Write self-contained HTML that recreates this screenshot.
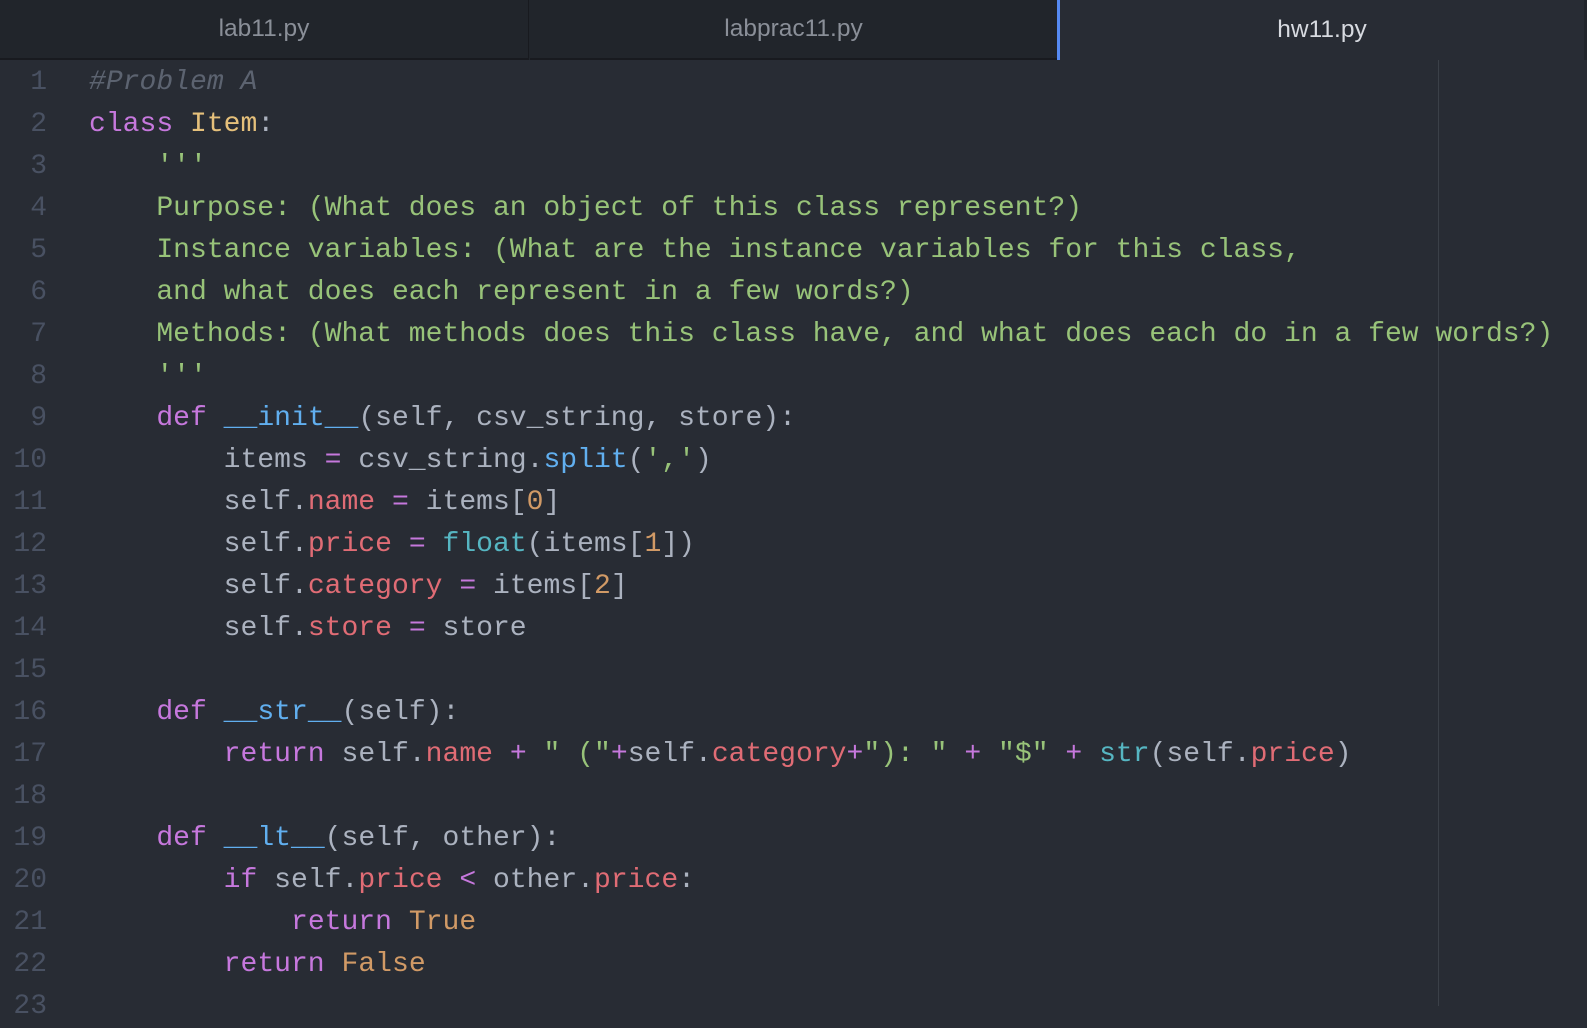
<!DOCTYPE html>
<html><head><meta charset="utf-8"><style>
*{margin:0;padding:0;box-sizing:border-box}
body{width:1587px;height:1006px;background:#282c34;overflow:hidden;position:relative;font-family:"Liberation Mono",monospace}
.tabs{position:absolute;left:0;top:0;width:1587px;height:60px;background:#21252b}
.tab{position:absolute;top:0;height:60px;font:24.5px "Liberation Sans",sans-serif;color:#8a8f98;display:flex;align-items:center;justify-content:center;border-bottom:2px solid #181a1f}
.t1{left:0;width:529px;border-right:1px solid #181a1f}
.t2{left:530px;width:527px}
.t3{left:1057px;width:527px;background:#282c34;color:#d7dae0;border-left:3px solid #568af2;border-bottom:none}
.guide{position:absolute;left:1438px;top:60px;width:1px;height:946px;background:#3b4048}
.gut{position:absolute;left:0;top:61.5px;width:47px;text-align:right;color:#495162;font-size:28px;line-height:42px;white-space:pre}
.code{position:absolute;left:89px;top:61.5px;color:#abb2bf;font-size:28.05px;line-height:42px;white-space:pre}
.c{color:#5c6370;font-style:italic}.k{color:#c678dd}.y{color:#e5c07b}.s{color:#98c379}.f{color:#61afef}.p{color:#e06c75}.n{color:#d19a66}.b{color:#56b6c2}
</style></head><body>
<div class="tabs"><div class="tab t1">lab11.py</div><div class="tab t2">labprac11.py</div><div class="tab t3">hw11.py</div></div>
<div class="guide"></div>
<div class="gut">1
2
3
4
5
6
7
8
9
10
11
12
13
14
15
16
17
18
19
20
21
22
23</div>
<div class="code"><span class="c">#Problem A</span>
<span class="k">class</span> <span class="y">Item</span>:
    <span class="s">'''</span>
<span class="s">    Purpose: (What does an object of this class represent?)</span>
<span class="s">    Instance variables: (What are the instance variables for this class,</span>
<span class="s">    and what does each represent in a few words?)</span>
<span class="s">    Methods: (What methods does this class have, and what does each do in a few words?)</span>
<span class="s">    '''</span>
    <span class="k">def</span> <span class="f">__init__</span>(self, csv_string, store):
        items <span class="k">=</span> csv_string.<span class="f">split</span>(<span class="s">','</span>)
        self.<span class="p">name</span> <span class="k">=</span> items[<span class="n">0</span>]
        self.<span class="p">price</span> <span class="k">=</span> <span class="b">float</span>(items[<span class="n">1</span>])
        self.<span class="p">category</span> <span class="k">=</span> items[<span class="n">2</span>]
        self.<span class="p">store</span> <span class="k">=</span> store

    <span class="k">def</span> <span class="f">__str__</span>(self):
        <span class="k">return</span> self.<span class="p">name</span> <span class="k">+</span> <span class="s">" ("</span><span class="k">+</span>self.<span class="p">category</span><span class="k">+</span><span class="s">"): "</span> <span class="k">+</span> <span class="s">"$"</span> <span class="k">+</span> <span class="b">str</span>(self.<span class="p">price</span>)

    <span class="k">def</span> <span class="f">__lt__</span>(self, other):
        <span class="k">if</span> self.<span class="p">price</span> <span class="k">&lt;</span> other.<span class="p">price</span>:
            <span class="k">return</span> <span class="n">True</span>
        <span class="k">return</span> <span class="n">False</span>
</div>
</body></html>
